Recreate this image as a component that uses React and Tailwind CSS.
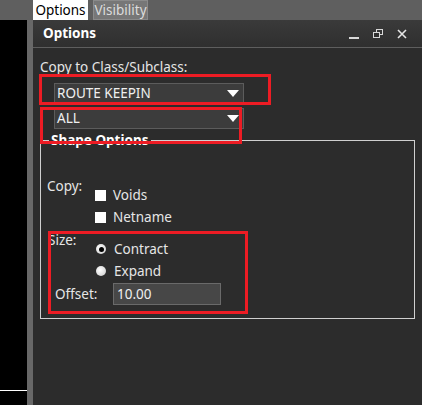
import React from "react";

const font = { fontFamily: '"Noto Sans", "Open Sans", sans-serif' };

function Dropdown({ value }) {
  return (
    <div className="flex h-[21px] w-[190px] items-center justify-between border border-[#5c5c5c] bg-[#3c3c3c] pl-[2px] pr-[4px] text-[13.5px] text-[#f0f0f0]">
      <span>{value}</span>
      <svg width="12" height="8" viewBox="0 0 12 8">
        <polygon points="0,0 12,0 6,7" fill="#ffffff" />
      </svg>
    </div>
  );
}

function Check({ label }) {
  return (
    <div className="flex h-[22px] items-center gap-[7px]">
      <span className="h-[11px] w-[11px] bg-white" />
      <span>{label}</span>
    </div>
  );
}

function Radio({ label, checked }) {
  return (
    <div className="flex h-[22px] items-center gap-[8px] pl-[1px]">
      <span className="flex h-[10px] w-[10px] items-center justify-center rounded-full bg-[radial-gradient(circle_at_40%_40%,#ffffff,#c8c8c8)]">
        {checked && <span className="h-[5px] w-[5px] rounded-full bg-black" />}
      </span>
      <span>{label}</span>
    </div>
  );
}

export default function App() {
  return (
    <div className="relative flex h-[405px] w-[422px] flex-col overflow-hidden bg-black" style={font}>
      {/* tab strip */}
      <div className="flex h-[20px] shrink-0 items-end bg-[#5f5f5f] pl-[33px]">
        <div className="flex h-[20px] w-[55px] items-center justify-center bg-white text-[13.5px] text-black">
          Options
        </div>
        <div className="ml-[5px] flex h-[20px] w-[55px] items-center justify-center border border-[#8a8a8a] bg-[#777777] text-[13.5px] text-[#dcdcdc]">
          Visibility
        </div>
      </div>

      <div className="flex min-h-0 flex-1">
        <div className="flex w-[27px] flex-col justify-end bg-black pb-[14px]">
          <div className="h-px bg-white" />
        </div>
        <div className="w-[6px] bg-[#686868]" />

        {/* panel */}
        <div className="flex flex-1 flex-col bg-[#2c2c2c] text-[13.5px] text-[#e6e6e6]">
          <div className="flex h-[28px] items-center justify-between border-b border-[#5e5e5e] bg-gradient-to-b from-[#3a3a3a] to-[#2f2f2f] pl-[10px] pr-[15px]">
            <span className="font-bold text-white">Options</span>
            <div className="flex items-center gap-[14px]">
              <svg width="10" height="10" viewBox="0 0 10 10" className="mt-[2px]">
                <rect x="0" y="7" width="10" height="2" fill="#d8d8d8" />
              </svg>
              <svg width="10" height="9" viewBox="0 0 10 9">
                <rect x="3.5" y="0.5" width="6" height="5" fill="none" stroke="#d8d8d8" />
                <rect x="0.5" y="3.5" width="6" height="5" fill="#2f2f2f" stroke="#d8d8d8" />
              </svg>
              <svg width="10" height="10" viewBox="0 0 10 10">
                <path d="M1 1 L9 9 M9 1 L1 9" stroke="#e6e6e6" strokeWidth="1.6" />
              </svg>
            </div>
          </div>

          <div className="flex flex-col pl-[7px] pt-[10px]">
            <div className="leading-[18px]">Copy to Class/Subclass:</div>
            <div className="mt-[7px] flex flex-col gap-[4px] pl-[14px]">
              <Dropdown value="ROUTE KEEPIN" />
              <Dropdown value="ALL" />
            </div>

            {/* shape options group */}
            <div className="relative mr-[7px] mt-[11px] border border-[#d0d0d0] pb-[13px] pl-[6px]">
              <span className="absolute -top-[10px] left-[8px] bg-[#2c2c2c] px-[2px] font-bold leading-[18px] text-white">
                Shape Options
              </span>

              <div className="mt-[36px] flex items-start">
                <div className="w-[48px] leading-[18px]">Copy:</div>
                <div className="flex flex-col pt-[7px]">
                  <Check label="Voids" />
                  <Check label="Netname" />
                </div>
              </div>

              <div className="mt-[3px] flex items-start">
                <div className="w-[48px] pl-[1px] leading-[18px]">Size:</div>
                <div className="flex flex-col pt-[7px]">
                  <Radio label="Contract" checked />
                  <Radio label="Expand" />
                </div>
              </div>

              <div className="mt-[1px] flex items-center">
                <div className="w-[66px] pl-[8px]">Offset:</div>
                <div className="flex h-[22px] w-[108px] items-center border border-[#6a6a6a] bg-[#474747] pl-[3px] text-[#f0f0f0]">
                  10.00
                </div>
              </div>
            </div>
          </div>
        </div>
      </div>

      {/* red annotation boxes */}
      <div className="pointer-events-none absolute left-[39px] top-[74px] h-[31px] w-[232px] border-[3px] border-[#ed1c24]" />
      <div className="pointer-events-none absolute left-[40px] top-[107px] h-[37px] w-[202px] border-[3px] border-[#ed1c24]" />
      <div className="pointer-events-none absolute left-[48px] top-[231px] h-[83px] w-[200px] border-[3px] border-[#ed1c24]" />
    </div>
  );
}
